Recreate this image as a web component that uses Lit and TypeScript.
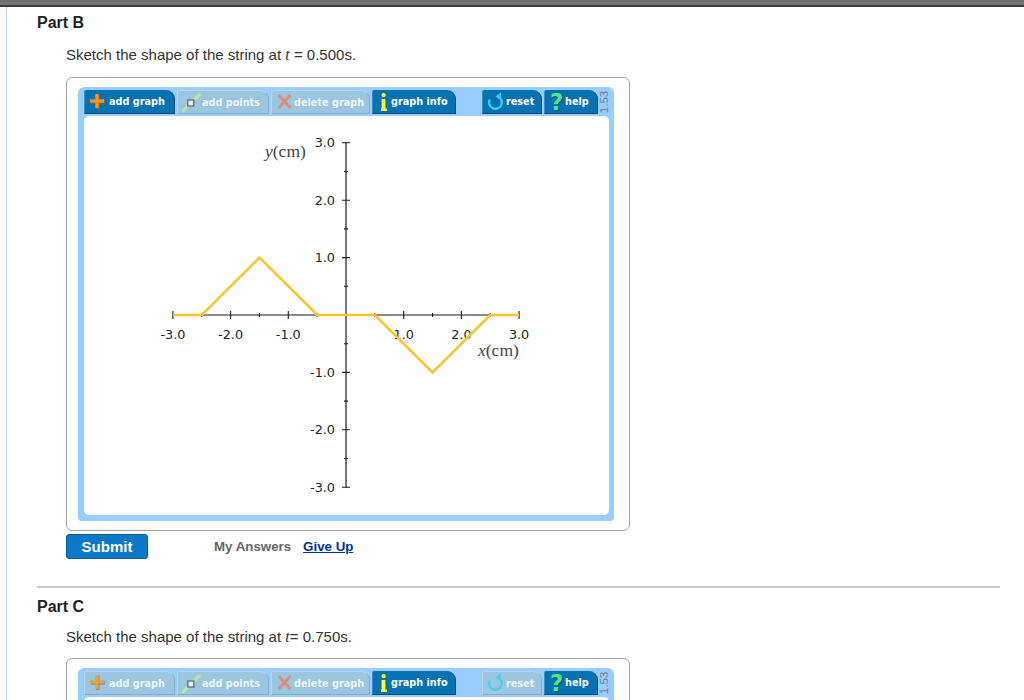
import { LitElement, html, css, svg } from "lit";
import { customElement, property } from "lit/decorators.js";

const OX = 262;
const OY = 199;
const UX = 57.7;
const UY = 57.4;
const px = (v: number) => OX + v * UX;
const py = (v: number) => OY - v * UY;
const CURVE: [number, number][] = [[-3, 0], [-2.5, 0], [-1.5, 1], [-0.5, 0], [0.5, 0], [1.5, -1], [2.5, 0], [3, 0]];
const HALF = [-3, -2.5, -2, -1.5, -1, -0.5, 0.5, 1, 1.5, 2, 2.5, 3];

const ICONS: Record<string, unknown> = {
  plus: svg`<path d="M7 1v14M0 8h14" stroke="#a85a1c" stroke-width="3.4" transform="translate(.7 .7)"/><path d="M7 1v14M0 8h14" stroke="#f7941d" stroke-width="3.4"/>`,
  points: svg`<path d="M1.5 17.5 17 2" stroke="#c8f08c" stroke-width="3.4" stroke-linecap="round"/><rect x="5.8" y="7" width="6" height="6" fill="#fff" stroke="#555" stroke-width="1.4"/>`,
  del: svg`<path d="M1.5 2 13.5 15M13.5 2 1.5 15" stroke="#f47b5c" stroke-width="3"/>`,
  info: svg`<circle cx="2.6" cy="2.2" r="2.1" fill="#ffff33"/><path d="M.6 6h3.8v9.6H6V18H0v-2.4h.6z" fill="#ffff33"/>`,
  reset: svg`<path d="M1.8 6.4A6.4 6.4 0 1 0 10.6 3.8" fill="none" stroke="#2fd0f2" stroke-width="2.4"/><path d="M7.4 3.4 13 -.4V7.4z" fill="#2fd0f2"/>`,
};

interface Btn { label: string; icon: string; width: number; text: number; left: number; off?: boolean; push?: boolean; }

@customElement("graph-widget")
class GraphWidget extends LitElement {
  @property({ type: Boolean }) resetOff = false;
  @property({ type: Boolean }) addOff = false;
  @property({ type: Boolean }) plot = false;

  static styles = css`
    :host { display: block; width: 564px; box-sizing: border-box; border: 1px solid #a3a3a3; border-radius: 6px; background: #fff; padding: 9px 15px 9px 11px; }
    .frame { background: #99ccff; border-radius: 6px 6px 4px 4px; padding: 3px 5px 6px 6px; }
    .bar { display: flex; height: 24px; margin-bottom: 2px; }
    .btn { box-sizing: border-box; height: 24px; margin-right: 2px; background: #0672b2; color: #fff; border-right: 1px solid #0c4a78; border-bottom: 1px solid #0c4a78; border-left: 1px solid #3d8cc0; border-radius: 2px 9px 0 0; display: flex; align-items: center; font: bold 9.7px "DejaVu Sans", sans-serif; white-space: nowrap; }
    .btn.off { background: #9cc6e0; color: #eef6fb; border-right-color: #85aecb; border-bottom-color: #85aecb; border-left-color: #b6d6ea; border-top: 1px solid #b6d6ea; }
    .btn.off svg, .btn.off .q { opacity: .72; }
    .btn.push { margin-left: auto; }
    .slot { display: flex; align-items: center; flex: none; }
    .slot svg { flex: none; overflow: visible; }
    .q { font: bold 23px "DejaVu Sans", sans-serif; color: #4fe890; text-shadow: 1px 1px 0 #0a4a60; line-height: 18px; }
    .ver { width: 9px; display: flex; align-items: center; justify-content: center; }
    .ver span { transform: rotate(-90deg); font: 11.5px "Liberation Sans", sans-serif; color: #6f7f8f; white-space: nowrap; }
    .panel { background: #fff; border-radius: 5px; height: 399px; }
    .panel svg { display: block; }
    .tick { font: 12.8px "DejaVu Sans", sans-serif; fill: #222; }
    .math { font: 17.5px "Liberation Serif", serif; fill: #444; }
    .math tspan { font-style: italic; }
  `;

  private buttons(): Btn[] {
    return [
      { label: "add graph", icon: "plus", width: 91, text: 24, left: 5, off: this.addOff },
      { label: "add points", icon: "points", width: 92, text: 24, left: 4, off: true },
      { label: "delete graph", icon: "del", width: 99, text: 22, left: 5, off: true },
      { label: "graph info", icon: "info", width: 84, text: 18, left: 8 },
      { label: "reset", icon: "reset", width: 60, text: 23, left: 5, off: this.resetOff, push: true },
      { label: "help", icon: "help", width: 54, text: 20, left: 5 },
    ];
  }

  private graph() {
    const axis = "#1a1a1a";
    const pts = CURVE.map(([x, y]) => `${px(x)},${py(y)}`).join(" ");
    return svg`
      <path d="M${px(-3)} ${OY}H${px(3)}M${OX} ${py(3)}V${py(-3)}" stroke="${axis}" stroke-width="1.2" fill="none"/>
      ${HALF.map((v) => {
        const s = Number.isInteger(v) ? 4 : 2;
        return svg`<path d="M${px(v)} ${OY - s}V${OY + s}M${OX - s} ${py(v)}H${OX + s}" stroke="${axis}" stroke-width="1.1"/>`;
      })}
      ${[-3, -2, -1, 1, 2, 3].map((v) => svg`
        <text class="tick" x="${px(v)}" y="${OY + 24}" text-anchor="middle">${v.toFixed(1)}</text>
        <text class="tick" x="${OX - 11}" y="${py(v) + 4.5}" text-anchor="end">${v.toFixed(1)}</text>`)}
      <text class="math" x="181" y="41"><tspan>y</tspan>(cm)</text>
      <text class="math" x="394" y="240"><tspan>x</tspan>(cm)</text>
      <polyline points="${pts}" fill="none" stroke="#fcc42c" stroke-width="2.6"/>
    `;
  }

  render() {
    return html`
      <div class="frame">
        <div class="bar">
          ${this.buttons().map((b) => html`
            <div class="btn ${b.off ? "off" : ""} ${b.push ? "push" : ""}" style="width:${b.width}px">
              <span class="slot" style="width:${b.text - b.left}px;margin-left:${b.left}px">
                ${b.icon === "help" ? html`<span class="q">?</span>` : html`<svg width="18" height="18" viewBox="0 0 18 18">${ICONS[b.icon]}</svg>`}
              </span>
              ${b.label}
            </div>`)}
          <div class="ver"><span>1.53</span></div>
        </div>
        <div class="panel">${this.plot ? html`<svg width="525" height="399">${this.graph()}</svg>` : ""}</div>
      </div>
    `;
  }
}

@customElement("app-root")
class AppRoot extends LitElement {
  static styles = css`
    :host { display: block; height: 700px; overflow: hidden; font-family: "Liberation Sans", Arial, sans-serif; color: #222; background: #fff; }
    .top { height: 7px; background: linear-gradient(#6f6f6f 0, #777 70%, #3a3a3a 71%, #3a3a3a 100%); }
    .main { margin-left: 6px; border-left: 1px solid #b9d3ea; padding: 0 24px 0 30px; height: 693px; }
    h2 { font-size: 16px; font-weight: bold; margin: 0; line-height: 18px; color: #222; }
    p { font-size: 15px; line-height: 18px; margin: 0 0 0 29px; color: #333; }
    i { font-family: "Liberation Serif", serif; font-size: 16px; }
    .b { padding-top: 7px; }
    .b p { margin-top: 14px; margin-bottom: 13px; }
    .w { margin-left: 29px; }
    .actions { margin: 3px 0 0 29px; display: flex; align-items: center; height: 25px; }
    .submit { box-sizing: border-box; width: 82px; height: 25px; background: #0b78c8; border: 1px solid #0a5a92; border-radius: 3px; color: #fff; font-weight: bold; font-size: 15px; display: flex; align-items: center; justify-content: center; }
    .mine { margin-left: 66px; font-weight: bold; font-size: 13.3px; color: #666; }
    .give { margin-left: 12px; font-weight: bold; font-size: 13.3px; color: #003399; text-decoration: underline; }
    hr { border: 0; border-top: 2px solid #c9c9c9; margin: 27px 0 10px; }
    .c p { margin-top: 12px; margin-bottom: 12px; }
  `;

  render() {
    return html`
      <div class="top"></div>
      <div class="main">
        <div class="b">
          <h2>Part B</h2>
          <p>Sketch the shape of the string at <i>t</i> = 0.500s.</p>
          <graph-widget class="w" plot></graph-widget>
          <div class="actions">
            <div class="submit">Submit</div>
            <span class="mine">My Answers</span>
            <span class="give">Give Up</span>
          </div>
        </div>
        <hr />
        <div class="c">
          <h2>Part C</h2>
          <p>Sketch the shape of the string at <i>t</i>= 0.750s.</p>
          <graph-widget class="w" addOff resetOff></graph-widget>
        </div>
      </div>
    `;
  }
}
